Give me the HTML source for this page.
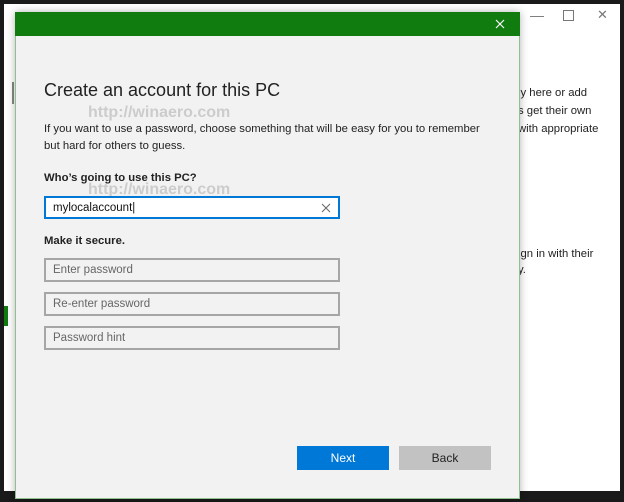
<!DOCTYPE html><html><head><style>
body{margin:0;width:624px;height:502px;background:#1a1a1a;position:relative;overflow:hidden;font-family:"Liberation Sans",sans-serif}
.a{position:absolute}
.win{left:4px;top:4px;width:616px;height:487px;background:#fff}
.dlg{left:15px;top:12px;width:503px;height:486px;background:#f2f2f2;border:1px solid #8fc08f;border-top:none;box-shadow:0 0 8px rgba(0,0,0,.3)}
.hd{left:15px;top:12px;width:505px;height:24px;background:#107c10}
.t{font-size:11.3px;color:#222}
.in{left:44px;width:285px;height:20px;border:2px solid #a6a6a6;background:#f2f2f2;font-size:11.5px;color:#666;line-height:20px;padding-left:7px;box-sizing:content-box}
.btn{top:446px;width:92px;height:24px;font-size:12px;text-align:center;line-height:24px}
.wm{font-size:16px;font-weight:bold;color:#ccc}
</style></head><body>
<div class="a win"></div>
<div class="a" style="left:530px;top:7px;font-size:14px;color:#777">—</div>
<div class="a" style="left:563px;top:10px;width:9px;height:9px;border:1px solid #777"></div>
<div class="a" style="left:597px;top:7px;font-size:13px;color:#777">✕</div>
<div class="a t" style="left:518px;top:84px;line-height:18px">ly here or add<br>s get their own<br>with appropriate</div>
<div class="a t" style="left:518px;top:246px;line-height:16px">ign in with their<br>y.</div>
<div class="a" style="left:4px;top:306px;width:4px;height:20px;background:#107c10"></div>
<div class="a" style="left:12px;top:82px;width:2px;height:22px;background:#888"></div>
<div class="a dlg"></div>
<div class="a hd"></div>
<svg class="a" style="left:495px;top:19px" width="10" height="10"><path d="M1 1L9 9M9 1L1 9" stroke="#fff" stroke-width="1.2"/></svg>
<div class="a" style="left:44px;top:80px;font-size:18px;color:#222;font-weight:300">Create an account for this PC</div>
<div class="a wm" style="left:88px;top:104px">http://winaero.com</div>
<div class="a wm" style="left:88px;top:181px">http://winaero.com</div>
<div class="a t" style="left:44px;top:121px;line-height:17px">If you want to use a password, choose something that will be easy for you to remember<br>but hard for others to guess.</div>
<div class="a t" style="left:44px;top:172px;font-weight:bold">Who’s going to use this PC?</div>
<div class="a in" style="top:196px;border-color:#0078d7;background:#fff;color:#111;height:19px">mylocalaccount|<svg style="position:absolute;right:7px;top:5px" width="10" height="10"><path d="M1 1L9 9M9 1L1 9" stroke="#666" stroke-width="1"/></svg></div>
<div class="a t" style="left:44px;top:235px;font-weight:bold">Make it secure.</div>
<div class="a in" style="top:258px">Enter password</div>
<div class="a in" style="top:292px">Re-enter password</div>
<div class="a in" style="top:326px">Password hint</div>
<div class="a btn" style="left:297px;background:#0078d7;color:#fff">Next</div>
<div class="a btn" style="left:399px;background:#c2c2c2;color:#222">Back</div>
</body></html>
